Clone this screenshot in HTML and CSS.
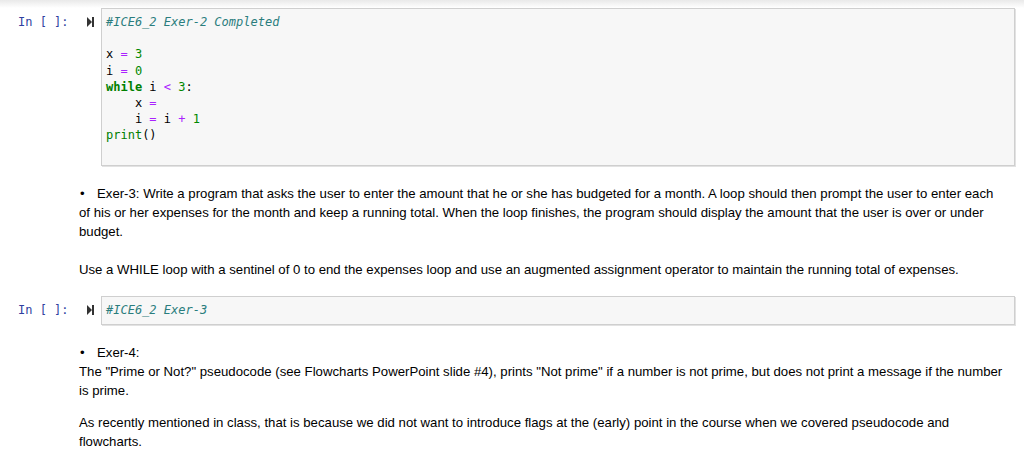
FILE: index.html
```html
<!DOCTYPE html>
<html lang="en">
<head>
  <meta charset="UTF-8" />
  <title>ICE6_2 - Notebook</title>
  <link rel="stylesheet" href="styles.css">
</head>
<body>
  <div class="header-shadow"></div>

  <div class="cell code-cell">
    <div class="prompt">In&nbsp;[&nbsp;]:</div>
    <div class="run">
      <svg width="7" height="10" viewBox="0 0 7 10"><polygon points="0,0 5,5 0,10" fill="#333"/><rect x="5" y="0" width="2" height="10" fill="#333"/></svg>
    </div>
    <pre class="input"><span class="c">#ICE6_2 Exer-2 Completed</span>

x <span class="o">=</span> <span class="n">3</span>
i <span class="o">=</span> <span class="n">0</span>
<span class="k">while</span> i <span class="o">&lt;</span> <span class="n">3</span>:
    x <span class="o">=</span>
    i <span class="o">=</span> i <span class="o">+</span> <span class="n">1</span>
<span class="b">print</span>()

</pre>
  </div>

  <div class="cell text-cell first-text">
    <ul>
      <li>Exer-3: Write a program that asks the user to enter the amount that he or she has budgeted for a month. A loop should then prompt the user to enter each of his or her expenses for the month and keep a running total. When the loop finishes, the program should display the amount that the user is over or under budget.</li>
    </ul>
    <p>Use a WHILE loop with a sentinel of 0 to end the expenses loop and use an augmented assignment operator to maintain the running total of expenses.</p>
  </div>

  <div class="cell code-cell">
    <div class="prompt">In&nbsp;[&nbsp;]:</div>
    <div class="run">
      <svg width="7" height="10" viewBox="0 0 7 10"><polygon points="0,0 5,5 0,10" fill="#333"/><rect x="5" y="0" width="2" height="10" fill="#333"/></svg>
    </div>
    <pre class="input single"><span class="c">#ICE6_2 Exer-3</span></pre>
  </div>

  <div class="cell text-cell second-text">
    <ul class="tight">
      <li>Exer-4:</li>
    </ul>
    <p>The "Prime or Not?" pseudocode (see Flowcharts PowerPoint slide #4), prints "Not prime" if a number is not prime, but does not print a message if the number is prime.</p>
    <p>As recently mentioned in class, that is because we did not want to introduce flags at the (early) point in the course when we covered pseudocode and flowcharts.</p>
  </div>
</body>
</html>
```

FILE: styles.css
```css
body {
  margin: 0;
  font-family: "Liberation Sans", Arial, sans-serif;
  font-size: 13.2px;
  color: #000;
  background: #fff;
}
.header-shadow {
  height: 8px;
  background: linear-gradient(#e9e9e9, #ffffff);
}
.cell {
  display: flex;
  padding-left: 18px;
  padding-right: 9px;
}
.prompt {
  width: 69px;
  padding-top: 6px;
  font-family: "DejaVu Sans Mono", monospace;
  font-size: 12px;
  line-height: 16.2px;
  color: #303f9f;
}
.run {
  width: 14px;
  padding-top: 9px;
}
.run svg {
  display: block;
}
.input {
  flex: 1;
  margin: 0;
  padding: 5px 4px;
  background: #f7f7f7;
  border: 1px solid #cfcfcf;
  box-shadow: 1px 1px 0 #e2e2e2;
  font-family: "DejaVu Sans Mono", monospace;
  font-size: 12px;
  line-height: 16.2px;
  color: #000;
}
.input.single {
  padding-bottom: 6px;
}
.c {
  color: #2a7d7d;
  font-style: italic;
}
.o {
  color: #aa22ff;
}
.n {
  color: #008800;
}
.k {
  color: #008000;
  font-weight: bold;
}
.b {
  color: #008000;
}
.text-cell {
  display: block;
  padding-left: 79px;
  padding-right: 18px;
  line-height: 19px;
}
.text-cell ul {
  list-style: none;
  margin: 0 0 19px;
  padding: 0;
}
.text-cell li::before {
  content: "\2022";
  display: inline-block;
  width: 18px;
  padding-left: 1px;
  box-sizing: border-box;
}
.text-cell p {
  margin: 0 0 13px;
}
.first-text {
  margin-top: 18px;
  margin-bottom: 17px;
}
.first-text p {
  margin-bottom: 0;
}
.second-text {
  margin-top: 18px;
}
.text-cell ul.tight {
  margin-bottom: 0;
}
```
